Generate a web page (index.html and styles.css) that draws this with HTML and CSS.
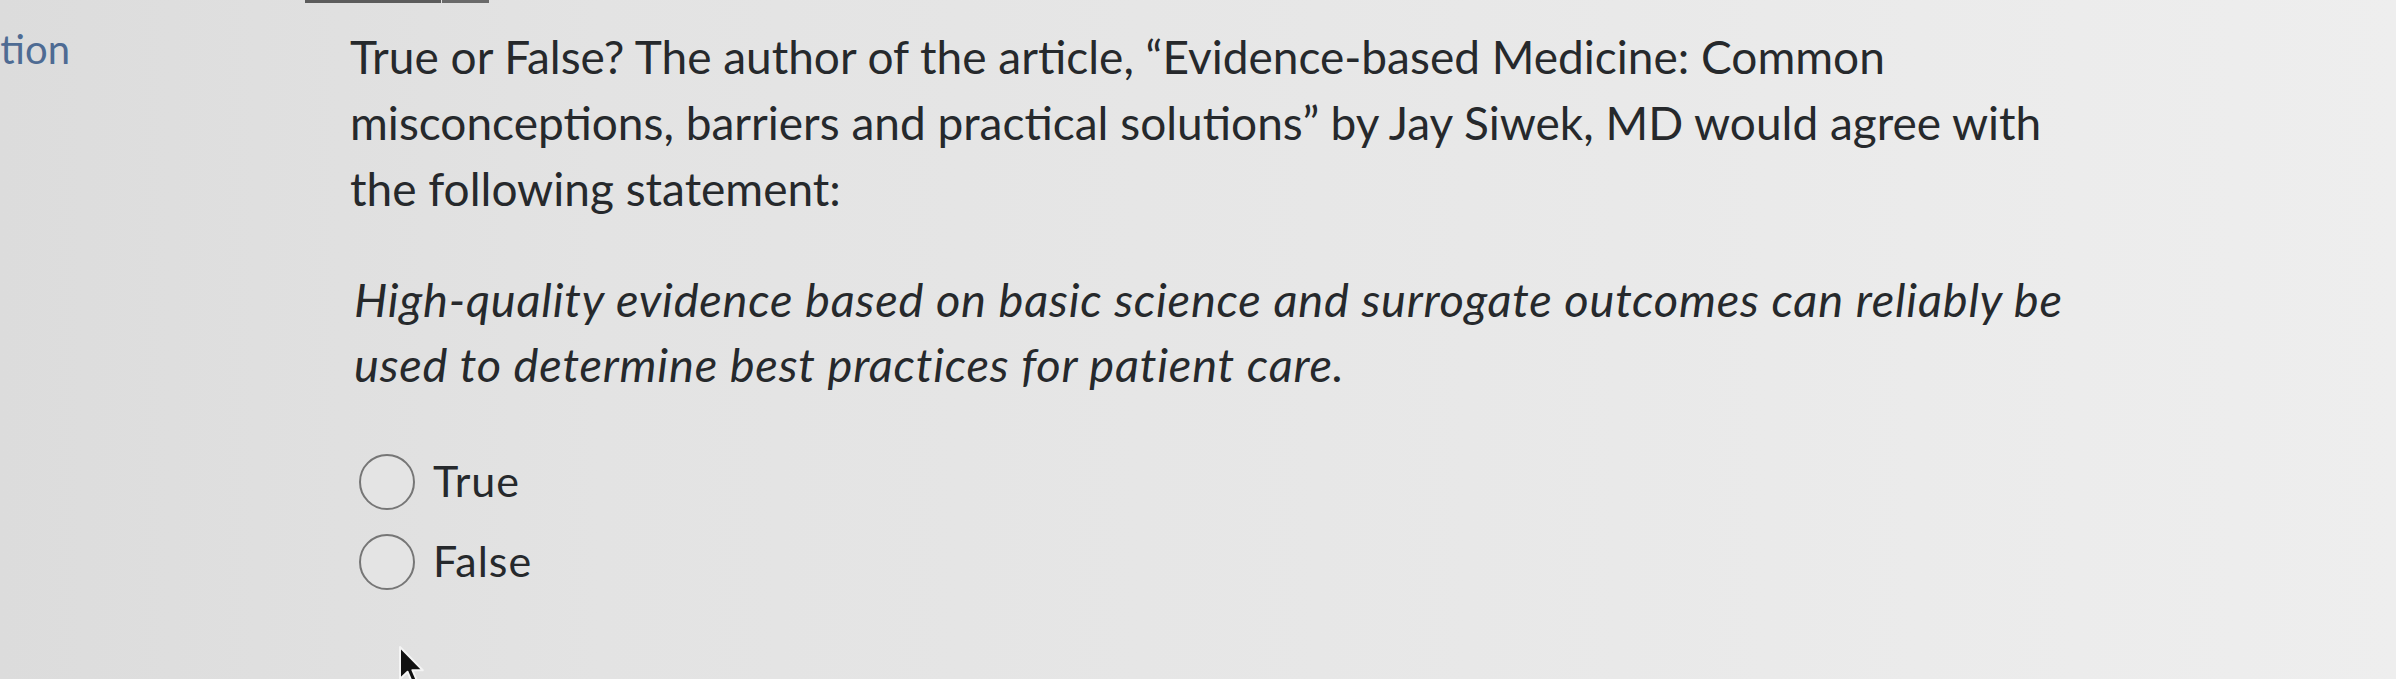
FILE: index.html
```html
<!DOCTYPE html>
<html lang="en">
<head>
<meta charset="utf-8">
<title>Quiz question</title>
<link rel="stylesheet" href="styles.css">
</head>
<body>
<div class="page">
  <aside class="side">
    <span class="side-label">Question</span>
  </aside>
  <div class="spacer"></div>
  <main class="content">
    <div class="tabbar"><span class="tab tab-a"></span><span class="tab tab-b"></span></div>
    <div class="question">
      <p class="prompt">True or False? The author of the article, “Evidence-based Medicine: Common misconceptions, barriers and practical solutions” by Jay Siwek, MD would agree with the following statement:</p>
      <p class="statement">High-quality evidence based on basic science and surrogate outcomes can reliably be used to determine best practices for patient care.</p>
      <ul class="answers">
        <li class="answer"><span class="radio"></span><span class="label">True</span></li>
        <li class="answer"><span class="radio"></span><span class="label">False</span></li>
      </ul>
    </div>
  </main>
  <svg class="cursor" width="30" height="44" viewBox="0 0 15 22">
    <path d="M1 1 L1 17 L4.8 13.4 L7.4 19.6 L9.8 18.6 L7.2 12.6 L12.4 12.6 Z" fill="#111" stroke="#f4f4f4" stroke-width="1" stroke-linejoin="round"/>
  </svg>
</div>
</body>
</html>
```

FILE: styles.css
```css
html, body {
  margin: 0;
  padding: 0;
}
body {
  width: 2396px;
  height: 679px;
  overflow: hidden;
  font-family: Lato, "Open Sans", "Liberation Sans", sans-serif;
  color: #26292c;
  background: linear-gradient(90deg, #dcdcdc 0%, #e3e3e3 25%, #e7e7e7 55%, #ebebeb 80%, #eeeeee 100%);
}
.page {
  position: relative;
  display: grid;
  grid-template-columns: 70px 235px 1fr;
  height: 679px;
}
.side {
  display: flex;
  justify-content: flex-end;
  align-items: flex-start;
  overflow: hidden;
  padding-top: 24px;
}
.side-label {
  white-space: nowrap;
  font-size: 40px;
  line-height: 50px;
  color: #4e6b93;
}
.content {
  display: flex;
  flex-direction: column;
}
.tabbar {
  display: flex;
  width: 184px;
  height: 3px;
}
.tab {
  display: block;
  height: 3px;
  background: #5c5c5c;
}
.tab-a {
  width: 136px;
}
.tab-b {
  width: 47px;
  margin-left: 1px;
  background: #6a6a6a;
}
.question {
  padding-left: 45px;
}
.prompt {
  width: 1730px;
  margin: 21px 0 0;
  font-size: 46px;
  line-height: 66px;
}
.statement {
  width: 1760px;
  margin: 45px 0 0 4px;
  font-size: 47px;
  line-height: 65px;
  letter-spacing: 0.8px;
  font-style: italic;
}
.answers {
  list-style: none;
  margin: 44px 0 0;
  padding: 0 0 0 9px;
}
.answer {
  display: flex;
  align-items: center;
  height: 80px;
  gap: 18px;
}
.radio {
  box-sizing: border-box;
  width: 56px;
  height: 56px;
  border: 2px solid #767676;
  border-radius: 50%;
  background: #e4e4e4;
  margin-top: 2px;
}
.label {
  font-size: 43px;
  line-height: 80px;
  letter-spacing: 1px;
}
.cursor {
  position: absolute;
  left: 398px;
  top: 645px;
}
```
